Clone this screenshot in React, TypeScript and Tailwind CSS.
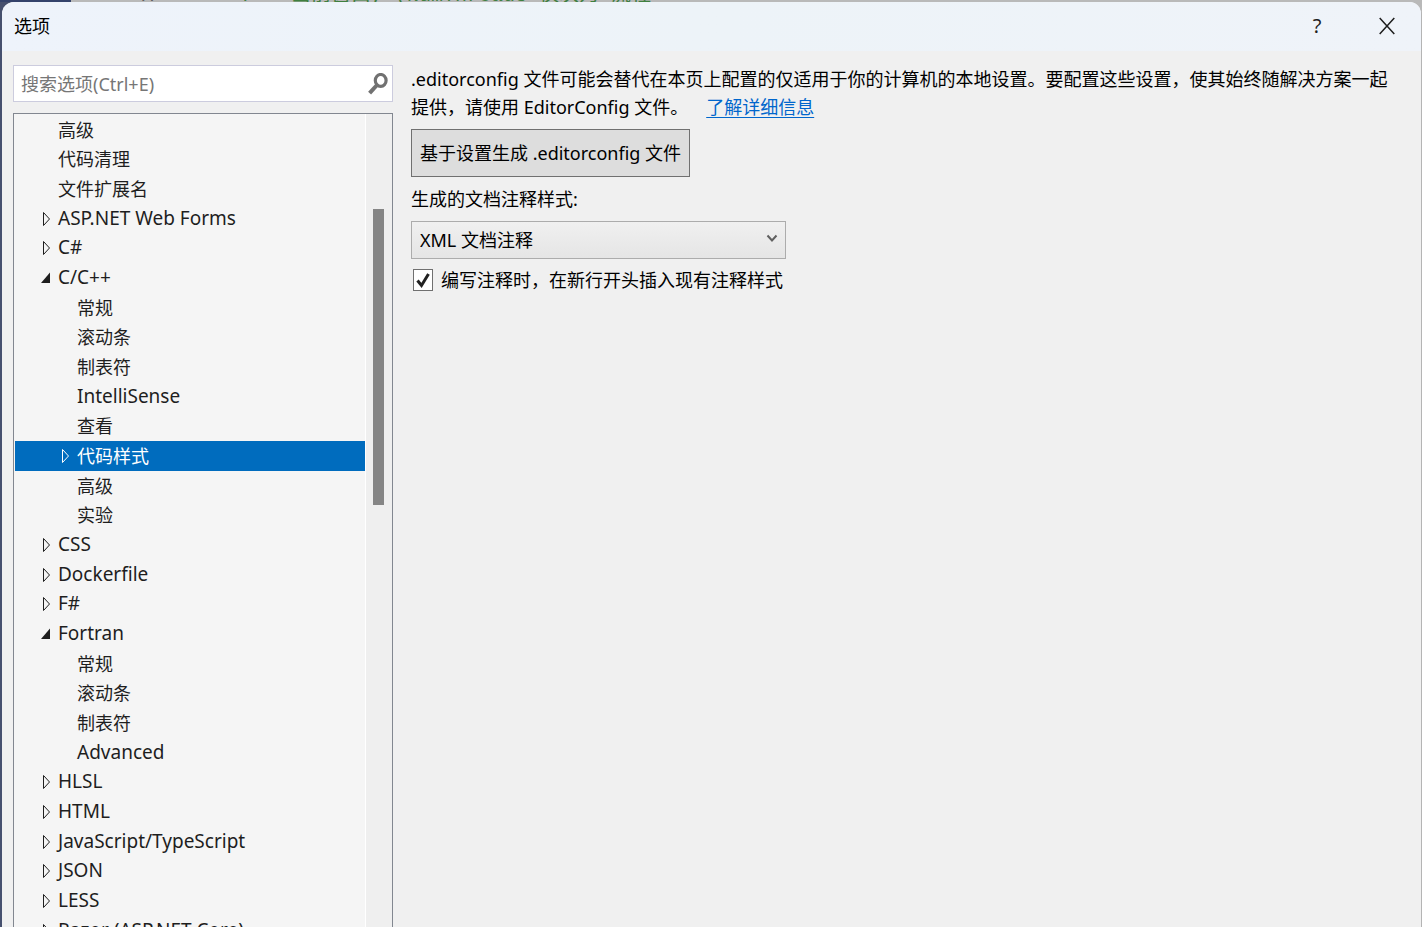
import { useState } from "react";

type TreeItem = {
  label: string;
  level: 1 | 2;
  state?: "open" | "closed";
};

const items: TreeItem[] = [
  { label: "高级", level: 1 },
  { label: "代码清理", level: 1 },
  { label: "文件扩展名", level: 1 },
  { label: "ASP.NET Web Forms", level: 1, state: "closed" },
  { label: "C#", level: 1, state: "closed" },
  { label: "C/C++", level: 1, state: "open" },
  { label: "常规", level: 2 },
  { label: "滚动条", level: 2 },
  { label: "制表符", level: 2 },
  { label: "IntelliSense", level: 2 },
  { label: "查看", level: 2 },
  { label: "代码样式", level: 2, state: "closed" },
  { label: "高级", level: 2 },
  { label: "实验", level: 2 },
  { label: "CSS", level: 1, state: "closed" },
  { label: "Dockerfile", level: 1, state: "closed" },
  { label: "F#", level: 1, state: "closed" },
  { label: "Fortran", level: 1, state: "open" },
  { label: "常规", level: 2 },
  { label: "滚动条", level: 2 },
  { label: "制表符", level: 2 },
  { label: "Advanced", level: 2 },
  { label: "HLSL", level: 1, state: "closed" },
  { label: "HTML", level: 1, state: "closed" },
  { label: "JavaScript/TypeScript", level: 1, state: "closed" },
  { label: "JSON", level: 1, state: "closed" },
  { label: "LESS", level: 1, state: "closed" },
  { label: "Razor (ASP.NET Core)", level: 1, state: "closed" },
];

function Expander({ state }: { state?: "open" | "closed" }) {
  return (
    <svg className="h-4 w-3 shrink-0" viewBox="0 0 12 16" aria-hidden="true">
      {state === "closed" && (
        <path d="M3.5 1.5v13l6-6.5z" fill="none" stroke="currentColor" strokeWidth="1" />
      )}
      {state === "open" && <path d="M10 2.5v10.500H1z" fill="currentColor" />}
    </svg>
  );
}

function OptionsTree() {
  const [selected, setSelected] = useState(11);

  return (
    <div className="mt-[11px] flex min-h-0 flex-1 border border-b-0 border-[#828790] bg-[#f5f5f5]">
      <ul role="tree" aria-label="选项" className="min-w-0 flex-1 overflow-hidden pl-px pt-px">
        {items.map((item, i) => (
          <li
            key={i}
            role="treeitem"
            aria-selected={i === selected}
            className="h-[30px] nth-[3n+1]:h-[29px]"
          >
            <button
              type="button"
              onClick={() => setSelected(i)}
              className={`flex h-full w-full items-center gap-1.5 text-left whitespace-nowrap ${
                item.level === 1 ? "pl-[25px]" : "pl-11"
              } ${/[A-Z]/.test(item.label) ? "text-[19px]" : "text-lg"} ${
                i === selected ? "bg-[#006cbe] text-white" : "text-[#1e1e1e]"
              }`}
            >
              <Expander state={item.state} />
              {item.label}
            </button>
          </li>
        ))}
      </ul>
      <div className="w-[27px] border-l border-white bg-[#efefef] pl-[7px] pt-[95px]">
        <div className="h-[296px] w-[11px] bg-[#858585]" />
      </div>
    </div>
  );
}

function TitleBar() {
  return (
    <header className="flex h-[49px] shrink-0 items-center bg-linear-to-r from-[#eef3fb] via-[#edf3f8] to-[#eff3f9] pb-0.5 pl-3 pr-[26px]">
      <h1 className="flex-1 text-black">选项</h1>
      <button type="button" aria-label="帮助" className="mr-[54px] w-4 text-xl text-[#1e1e1e]">
        ?
      </button>
      <button type="button" aria-label="关闭" className="text-[#1e1e1e]">
        <svg className="h-[18px] w-4" viewBox="0 0 16 18" aria-hidden="true">
          <path d="M.7 1l14.6 16M15.3 1L.7 17" fill="none" stroke="currentColor" strokeWidth="1.5" />
        </svg>
      </button>
    </header>
  );
}

function SearchBox() {
  return (
    <div className="flex h-[37px] shrink-0 items-center border border-[#ccccde] bg-white pl-[7px] pr-1">
      <input
        type="search"
        aria-label="搜索选项"
        placeholder="搜索选项(Ctrl+E)"
        className="min-w-0 flex-1 outline-none placeholder:text-[#767676]"
      />
      <svg className="h-[22px] w-5 text-[#717171]" viewBox="0 0 20 22" aria-hidden="true">
        <ellipse cx="12.7" cy="7.4" rx="5.4" ry="5.9" fill="none" stroke="currentColor" strokeWidth="3.2" />
        <path d="M9 12L1.6 20.2" fill="none" stroke="currentColor" strokeWidth="4" />
      </svg>
    </div>
  );
}

function CodeStylePage() {
  const [continueComments, setContinueComments] = useState(true);

  return (
    <main className="flex min-w-0 flex-1 flex-col items-start text-black">
      <p className="leading-7">
        .editorconfig 文件可能会替代在本页上配置的仅适用于你的计算机的本地设置。要配置这些设置，使其始终随解决方案一起提供，请使用
        EditorConfig 文件。
        <a href="#" className="ml-[18px] text-[#0066cc] underline underline-offset-3">
          了解详细信息
        </a>
      </p>
      <button type="button" className="mt-2 h-12 border border-[#707070] bg-[#dddddd] px-2">
        基于设置生成 .editorconfig 文件
      </button>
      <label htmlFor="doc-style" className="mt-2 leading-7">
        生成的文档注释样式:
      </label>
      <div className="relative mt-2 w-[375px]">
        <select
          id="doc-style"
          className="h-[38px] w-full appearance-none border border-[#acacac] bg-linear-to-b from-[#f0f0f0] to-[#e5e5e5] pl-2"
        >
          <option>XML 文档注释</option>
        </select>
        <svg
          className="pointer-events-none absolute right-2 top-3 h-3 w-3 text-[#606060]"
          viewBox="0 0 12 12"
          aria-hidden="true"
        >
          <path d="M1.5 2.5L6 7.5l4.500-5" fill="none" stroke="currentColor" strokeWidth="2" />
        </svg>
      </div>
      <label className="mt-[7px] flex items-center gap-2 pl-0.5 leading-7">
        <span className="relative flex">
          <input
            type="checkbox"
            checked={continueComments}
            onChange={(e) => setContinueComments(e.target.checked)}
            className="h-[22px] w-5 appearance-none border border-[#707070] bg-white"
          />
          {continueComments && (
            <svg
              className="pointer-events-none absolute inset-0 h-[22px] w-5 text-[#212121]"
              viewBox="0 0 20 22"
              aria-hidden="true"
            >
              <path d="M4.500 11.500L8.500 16.500L15.500 5" fill="none" stroke="currentColor" strokeWidth="3" />
            </svg>
          )}
        </span>
        编写注释时，在新行开头插入现有注释样式
      </label>
    </main>
  );
}

// Sliver of the editor window that stays visible above the dialog
function EditorBackdrop() {
  return (
    <div
      aria-hidden="true"
      className="flex h-0.5 items-end overflow-hidden whitespace-pre bg-[#b9b9b9] font-['Liberation_Mono','Noto_Sans_CJK_SC',monospace] text-xl leading-3 text-[#3f7f3f]"
    >
      <div className="h-full w-[71px] bg-[#34426b]" />
      <span className="ml-16 text-[#606060]">47</span>
      <span className="ml-[84px]">/</span>
      <span className="ml-9">当前窗口, (NumThreads 仅次为 流程</span>
    </div>
  );
}

export default function App() {
  return (
    <div className="flex h-screen flex-col overflow-hidden bg-[#b9b9b9] font-['Noto_Sans','Noto_Sans_CJK_SC',sans-serif] text-lg">
      <EditorBackdrop />
      <div className="min-h-0 flex-1 bg-linear-to-r from-[#46506e] from-50% to-[#b9b9b9] to-50% pl-0.5">
        <div className="flex h-full flex-col overflow-hidden rounded-t-xl border-r border-[#b4b4b4] bg-[#f0f0f0]">
          <TitleBar />
          <div className="flex min-h-0 flex-1 gap-[18px] pl-[11px] pr-5 pt-3.5">
            <aside className="flex w-[380px] shrink-0 flex-col">
              <SearchBox />
              <OptionsTree />
            </aside>
            <CodeStylePage />
          </div>
        </div>
      </div>
    </div>
  );
}
